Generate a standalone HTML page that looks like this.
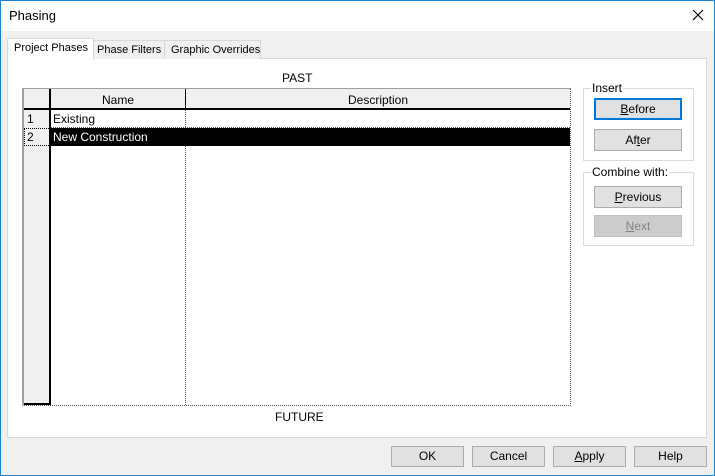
<!DOCTYPE html><html><head><style>
body{margin:0;width:715px;height:476px;position:relative;overflow:hidden;background:#f0f0f0;font-family:"Liberation Sans",sans-serif;font-size:12px;color:#000}
.a{position:absolute;box-sizing:border-box;white-space:nowrap}
.t{font-size:11px}
.btn{position:absolute;box-sizing:border-box;background:#e1e1e1;border:1px solid #adadad;text-align:center;line-height:19px;font-size:12px}
.grp{position:absolute;box-sizing:border-box;border:1px solid #dcdcdc}
.gl{position:absolute;background:#fff;padding:0 1px;font-size:12px;top:-8px;left:6px;white-space:nowrap}
</style></head><body>
<div class="a" style="left:0;top:0;width:715px;height:476px;border:1px solid #1883d7"></div>
<div class="a" style="left:1px;top:1px;width:713px;height:30px;background:#fff"></div>
<div class="a" style="left:9px;top:8px;font-size:13px">Phasing</div>
<svg class="a" style="left:692px;top:9px" width="12" height="12"><path d="M1 1L11 11M11 1L1 11" stroke="#000" stroke-width="1.2"/></svg>
<div class="a" style="left:7px;top:58px;width:700px;height:380px;background:#fff;border:1px solid #d9d9d9"></div>
<div class="a t" style="left:93px;top:40px;width:72px;height:19px;border:1px solid #d9d9d9;border-bottom:none;background:#f0f0f0;padding:3px 0 0 3px">Phase Filters</div>
<div class="a t" style="left:164px;top:40px;width:97px;height:19px;border:1px solid #d9d9d9;border-bottom:none;background:#f0f0f0;padding:3px 0 0 6px">Graphic Overrides</div>
<div class="a t" style="left:7px;top:38px;width:87px;height:22px;border:1px solid #d9d9d9;border-bottom:none;background:#fff;padding:3px 0 0 6px">Project Phases</div>
<div class="a" style="left:282px;top:71px">PAST</div>
<div class="a" style="left:275px;top:410px">FUTURE</div>
<div class="a" style="left:22px;top:88px;width:549px;height:318px;border-left:2px solid #a0a0a0;border-top:1px solid #a0a0a0;border-bottom:1px dotted #555;border-right:1px dotted #555"></div>
<div class="a" style="left:24px;top:89px;width:27px;height:316px;background:#f0f0f0;border-right:2px solid #000;border-bottom:2px solid #000"></div>
<div class="a" style="left:51px;top:89px;width:519px;height:21px;background:#f0f0f0;border-bottom:2px solid #000"></div>
<div class="a" style="left:24px;top:89px;width:27px;height:21px;border-bottom:2px solid #000"></div>
<div class="a" style="left:185px;top:89px;width:1px;height:21px;background:#000"></div>
<div class="a" style="left:51px;top:93px;width:134px;text-align:center">Name</div>
<div class="a" style="left:186px;top:93px;width:384px;text-align:center">Description</div>
<div class="a" style="left:185px;top:110px;width:0;height:295px;border-left:1px dotted #555"></div>
<div class="a" style="left:51px;top:127px;width:519px;height:0;border-top:1px dotted #555"></div>
<div class="a" style="left:27px;top:112px">1</div>
<div class="a" style="left:53px;top:112px">Existing</div>
<div class="a" style="left:51px;top:128px;width:519px;height:18px;background:#000"></div>
<div class="a" style="left:24px;top:128px;width:27px;height:18px;border:1px dotted #000"></div>
<div class="a" style="left:27px;top:130px">2</div>
<div class="a" style="left:53px;top:130px;color:#fff">New Construction</div>
<div class="grp" style="left:583px;top:88px;width:111px;height:73px"><span class="gl" style="left:7px">Insert</span></div>
<div class="btn" style="left:594px;top:98px;width:88px;height:22px;border:2px solid #0078d7;line-height:18px"><u>B</u>efore</div>
<div class="btn" style="left:594px;top:129px;width:88px;height:22px;line-height:20px">Af<u>t</u>er</div>
<div class="grp" style="left:583px;top:172px;width:111px;height:74px"><span class="gl" style="left:7px">Combine with:</span></div>
<div class="btn" style="left:594px;top:186px;width:88px;height:22px;line-height:20px"><u>P</u>revious</div>
<div class="btn" style="left:594px;top:215px;width:88px;height:22px;line-height:20px;background:#cccccc;border-color:#bfbfbf;color:#838383"><u>N</u>ext</div>
<div class="btn" style="left:391px;top:446px;width:73px;height:21px">OK</div>
<div class="btn" style="left:472px;top:446px;width:73px;height:21px">Cancel</div>
<div class="btn" style="left:553px;top:446px;width:73px;height:21px"><u>A</u>pply</div>
<div class="btn" style="left:634px;top:446px;width:73px;height:21px">Help</div>
</body></html>
